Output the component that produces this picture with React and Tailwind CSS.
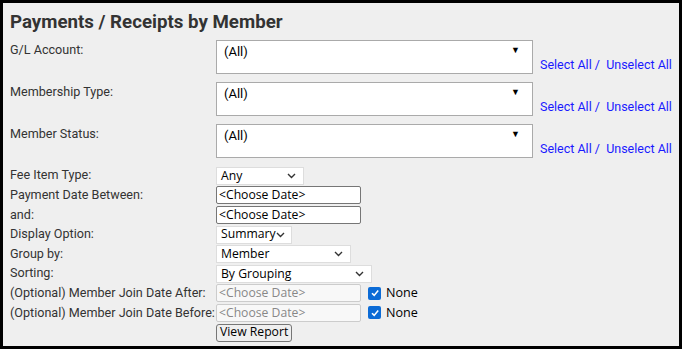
import React from 'react';

const font = { fontFamily: 'Roboto, "Liberation Sans", Arial, sans-serif' };
const ctl = { fontFamily: '"Open Sans", "Noto Sans", sans-serif' };

const Chevron = () => (
  <svg width="9" height="6" viewBox="0 0 9 6" className="shrink-0">
    <path d="M1 1 L4.5 4.5 L8 1" fill="none" stroke="#333" strokeWidth="1.4" />
  </svg>
);

const MultiRow = ({ label }) => (
  <div className="flex items-end">
    <div className="w-[206px] self-start pt-[1px] text-[12.6px] text-[#333]">{label}</div>
    <div className="flex h-[34px] w-[317px] justify-between border border-[#aaa] bg-white pl-[7px] pr-[12px] pt-[1px]">
      <span className="text-[13px] text-black">(All)</span>
      <span className="pt-[2px] text-[9px] text-black">▼</span>
    </div>
    <div className="mb-[-1px] ml-[7px] whitespace-nowrap text-[12.5px] text-[#1a1aff]">
      Select All /&nbsp; Unselect All
    </div>
  </div>
);

const Select = ({ value, w }) => (
  <div className={`flex h-[18px] ${w} items-center justify-between border border-[#ddd] bg-white pl-[4px] pr-[7px] text-[12.2px] text-black`} style={ctl}>
    <span className="leading-none">{value}</span>
    <Chevron />
  </div>
);

const DateInput = ({ disabled }) => (
  <div
    className={`flex h-[18px] w-[145px] items-center rounded-[2px] border pl-[2px] text-[12.2px] ${disabled ? 'border-[#ccc] bg-[#f8f8f8] text-[#888]' : 'border-[#767676] bg-white text-black'}`}
    style={ctl}
  >
    <span className="leading-none">&lt;Choose Date&gt;</span>
  </div>
);

const Row = ({ label, children }) => (
  <div className="flex h-[19.6px] items-center">
    <div className="w-[206px] whitespace-nowrap text-[12.6px] text-[#333]">{label}</div>
    {children}
  </div>
);

const Check = () => (
  <div className="ml-[7px] flex items-center">
    <div className="flex h-[13px] w-[13px] items-center justify-center rounded-[2px] bg-[#0b6bd6]">
      <svg width="10" height="10" viewBox="0 0 10 10">
        <path d="M2 5.2 L4.2 7.4 L8.2 2.6" fill="none" stroke="white" strokeWidth="1.6" />
      </svg>
    </div>
    <span className="ml-[5px] text-[12.6px] text-black" style={ctl}>None</span>
  </div>
);

export default function App() {
  return (
    <div className="h-[349px] w-[682px] border-[3px] border-black bg-[#efefef] pl-[7px] pt-[6px]" style={font}>
      <h1 className="text-[18.7px] font-bold leading-[26px] text-[#333]">Payments / Receipts by Member</h1>
      <div className="mt-[5px] flex flex-col gap-[8px]">
        <MultiRow label="G/L Account:" />
        <MultiRow label="Membership Type:" />
        <MultiRow label="Member Status:" />
      </div>
      <div className="mt-[8px] flex flex-col">
        <Row label="Fee Item Type:"><Select value="Any" w="w-[88px]" /></Row>
        <Row label="Payment Date Between:"><DateInput /></Row>
        <Row label="and:"><DateInput /></Row>
        <Row label="Display Option:"><Select value="Summary" w="w-[76px]" /></Row>
        <Row label="Group by:"><Select value="Member" w="w-[135px]" /></Row>
        <Row label="Sorting:"><Select value="By Grouping" w="w-[156px]" /></Row>
        <Row label="(Optional) Member Join Date After:"><DateInput disabled /><Check /></Row>
        <Row label="(Optional) Member Join Date Before:"><DateInput disabled /><Check /></Row>
        <Row label="">
          <button className="flex h-[18px] items-center rounded-[3px] border border-[#767676] bg-[#efefef] px-[3px] text-[12.2px] leading-none text-black" style={ctl}>
            View Report
          </button>
        </Row>
      </div>
    </div>
  );
}
